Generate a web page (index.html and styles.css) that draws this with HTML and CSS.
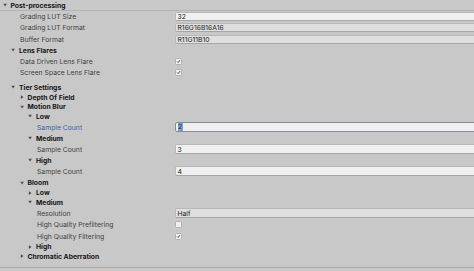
FILE: index.html
```html
<!DOCTYPE html>
<html>
<head>
<meta charset="utf-8">
<link rel="stylesheet" href="styles.css">
</head>
<body>
<div class="inspector">
  <div class="row fold hdr f0"><span class="tri"><svg viewBox="0 0 5 5"><polygon points="0.3,1 4.7,1 2.5,4.2"/></svg></span><span class="name">Post-processing</span></div>

  <div class="row prop h113"><span class="label p1">Grading LUT Size</span><div class="field int">32</div></div>
  <div class="row prop h113"><span class="label p1">Grading LUT Format</span><div class="field drop">R16G16B16A16</div></div>
  <div class="row prop h113"><span class="label p1">Buffer Format</span><div class="field drop">R11G11B10</div></div>

  <div class="row fold f1 h106"><span class="tri"><svg viewBox="0 0 5 5"><polygon points="0.3,1 4.7,1 2.5,4.2"/></svg></span><span class="name">Lens Flares</span></div>
  <div class="row prop h113"><span class="label p1">Data Driven Lens Flare</span><div class="check on"><svg viewBox="0 0 7 7"><polyline points="1.6,3.6 3,5 5.6,1.6"/></svg></div></div>
  <div class="row prop h113"><span class="label p1">Screen Space Lens Flare</span><div class="check on"><svg viewBox="0 0 7 7"><polyline points="1.6,3.6 3,5 5.6,1.6"/></svg></div></div>

  <div class="row fold f1 gap"><span class="tri"><svg viewBox="0 0 5 5"><polygon points="0.3,1 4.7,1 2.5,4.2"/></svg></span><span class="name">Tier Settings</span></div>
  <div class="row fold f2"><span class="tri"><svg viewBox="0 0 5 5"><polygon points="1,0.3 4.2,2.5 1,4.7"/></svg></span><span class="name">Depth Of Field</span></div>
  <div class="row fold f2"><span class="tri"><svg viewBox="0 0 5 5"><polygon points="0.3,1 4.7,1 2.5,4.2"/></svg></span><span class="name">Motion Blur</span></div>
  <div class="row fold f3"><span class="tri"><svg viewBox="0 0 5 5"><polygon points="0.3,1 4.7,1 2.5,4.2"/></svg></span><span class="name">Low</span></div>
  <div class="row prop h12"><span class="label p3 focus">Sample Count</span><div class="field int tall focused"><span class="sel">2</span></div></div>
  <div class="row fold f3"><span class="tri"><svg viewBox="0 0 5 5"><polygon points="0.3,1 4.7,1 2.5,4.2"/></svg></span><span class="name">Medium</span></div>
  <div class="row prop h12"><span class="label p3">Sample Count</span><div class="field int tall">3</div></div>
  <div class="row fold f3 h103"><span class="tri"><svg viewBox="0 0 5 5"><polygon points="0.3,1 4.7,1 2.5,4.2"/></svg></span><span class="name">High</span></div>
  <div class="row prop h12"><span class="label p3">Sample Count</span><div class="field int tall">4</div></div>

  <div class="row fold f2 h106"><span class="tri"><svg viewBox="0 0 5 5"><polygon points="0.3,1 4.7,1 2.5,4.2"/></svg></span><span class="name">Bloom</span></div>
  <div class="row fold f3"><span class="tri"><svg viewBox="0 0 5 5"><polygon points="1,0.3 4.2,2.5 1,4.7"/></svg></span><span class="name">Low</span></div>
  <div class="row fold f3"><span class="tri"><svg viewBox="0 0 5 5"><polygon points="0.3,1 4.7,1 2.5,4.2"/></svg></span><span class="name">Medium</span></div>
  <div class="row prop h115"><span class="label p3">Resolution</span><div class="field drop tall">Half</div></div>
  <div class="row prop h115"><span class="label p3">High Quality Prefiltering</span><div class="check"></div></div>
  <div class="row prop h115"><span class="label p3">High Quality Filtering</span><div class="check on"><svg viewBox="0 0 7 7"><polyline points="1.6,3.6 3,5 5.6,1.6"/></svg></div></div>
  <div class="row fold f3 h99"><span class="tri"><svg viewBox="0 0 5 5"><polygon points="1,0.3 4.2,2.5 1,4.7"/></svg></span><span class="name">High</span></div>
  <div class="row fold f2"><span class="tri"><svg viewBox="0 0 5 5"><polygon points="1,0.3 4.2,2.5 1,4.7"/></svg></span><span class="name">Chromatic Aberration</span></div>
</div>
</body>
</html>
```

FILE: styles.css
```css
html, body {
  margin: 0;
  padding: 0;
  background: #c8c8c8;
  overflow: hidden;
}
body {
  width: 474px;
  height: 271px;
  font-family: Inter, "Liberation Sans", Arial, sans-serif;
  font-size: 6.8px;
  color: #3a3a3a;
}
.inspector {
  display: flex;
  flex-direction: column;
  width: 474px;
  height: 268px;
  box-sizing: border-box;
  border-bottom: 1px solid #a9a9a9;
  overflow: hidden;
}
.row {
  flex: 0 0 auto;
  box-sizing: border-box;
}
.fold {
  display: flex;
  align-items: center;
  height: 9.7px;
  font-weight: bold;
  color: #161616;
}
.hdr {
  height: 11px;
  border-bottom: 1px solid #b3b3b3;
}
.tri {
  flex: 0 0 8px;
  width: 8px;
  height: 5px;
  display: flex;
  align-items: center;
}
.tri svg {
  width: 4.2px;
  height: 4.2px;
  fill: #505050;
}
.f0 { padding-left: 2.5px; }
.f1 { padding-left: 11px; }
.f2 { padding-left: 19.5px; }
.f3 { padding-left: 28px; }
.gap { margin-top: 4.5px; }

.prop {
  display: grid;
  grid-template-columns: 175px 1fr;
  align-items: center;
}
.h113 { height: 11.3px; }
.h106 { height: 10.6px; }
.h12 { height: 12px; }
.h103 { height: 10.3px; }
.h115 { height: 11.5px; }
.h99 { height: 9.9px; }

.label {
  white-space: nowrap;
  color: #424242;
}
.p1 { padding-left: 20px; }
.p3 { padding-left: 37px; }
.label.focus { color: #3a62b0; }

.field {
  box-sizing: border-box;
  height: 9px;
  margin-right: -6px;
  border: 1px solid #b8b8b8;
  border-bottom-color: #a6a6a6;
  border-radius: 2px;
  padding-left: 1.5px;
  line-height: 7px;
  color: #222;
  white-space: nowrap;
  display: flex;
  align-items: center;
}
.field.tall { height: 10px; }
.field.int { background: #f0f0f0; }
.field.drop { background: #dfdfdf; }
.field.focused {
  border-color: #7f8fa0;
}
.sel {
  background: #7c9ed6;
  color: #1d2a40;
  padding: 0 0.5px;
  line-height: 8px;
}
.check {
  box-sizing: border-box;
  width: 7px;
  height: 7px;
  background: #efefef;
  border: 1px solid #b0b0b0;
  border-radius: 1.5px;
  display: flex;
}
.check svg {
  width: 5px;
  height: 5px;
  fill: none;
  stroke: #1e1e1e;
  stroke-width: 1.1;
}
```
